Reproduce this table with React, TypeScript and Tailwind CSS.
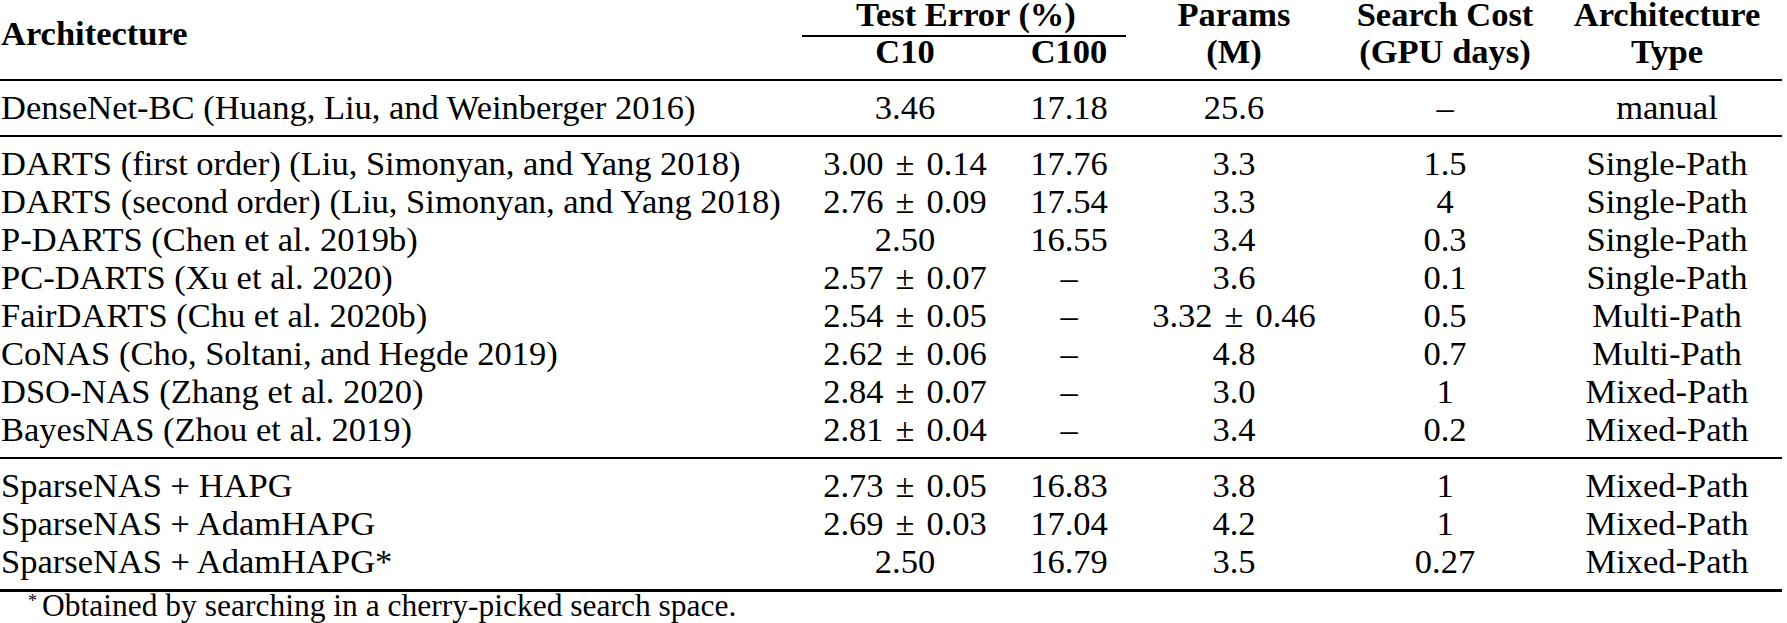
import React from "react";

type Cell = React.ReactNode;

function PM({ a, b }: { a: string; b: string }) {
  return (
    <span>
      {a}
      <span className="mx-[12px]">±</span>
      {b}
    </span>
  );
}

const sections: Cell[][][] = [
  [["DenseNet-BC (Huang, Liu, and Weinberger 2016)", "3.46", "17.18", "25.6", "–", "manual"]],
  [
    ["DARTS (first order) (Liu, Simonyan, and Yang 2018)", <PM a="3.00" b="0.14" />, "17.76", "3.3", "1.5", "Single-Path"],
    ["DARTS (second order) (Liu, Simonyan, and Yang 2018)", <PM a="2.76" b="0.09" />, "17.54", "3.3", "4", "Single-Path"],
    ["P-DARTS (Chen et al. 2019b)", "2.50", "16.55", "3.4", "0.3", "Single-Path"],
    ["PC-DARTS (Xu et al. 2020)", <PM a="2.57" b="0.07" />, "–", "3.6", "0.1", "Single-Path"],
    ["FairDARTS (Chu et al. 2020b)", <PM a="2.54" b="0.05" />, "–", <PM a="3.32" b="0.46" />, "0.5", "Multi-Path"],
    ["CoNAS (Cho, Soltani, and Hegde 2019)", <PM a="2.62" b="0.06" />, "–", "4.8", "0.7", "Multi-Path"],
    ["DSO-NAS (Zhang et al. 2020)", <PM a="2.84" b="0.07" />, "–", "3.0", "1", "Mixed-Path"],
    ["BayesNAS (Zhou et al. 2019)", <PM a="2.81" b="0.04" />, "–", "3.4", "0.2", "Mixed-Path"],
  ],
  [
    ["SparseNAS + HAPG", <PM a="2.73" b="0.05" />, "16.83", "3.8", "1", "Mixed-Path"],
    ["SparseNAS + AdamHAPG", <PM a="2.69" b="0.03" />, "17.04", "4.2", "1", "Mixed-Path"],
    ["SparseNAS + AdamHAPG*", "2.50", "16.79", "3.5", "0.27", "Mixed-Path"],
  ],
];

function Row({ cells }: { cells: Cell[] }) {
  return (
    <div className="grid grid-cols-[802px_206px_122px_208px_214px_230px] h-[38px] leading-[38px] whitespace-nowrap">
      <div className="pl-[1px]">{cells[0]}</div>
      {cells.slice(1).map((c, i) => (
        <div key={i} className="text-center">
          {c}
        </div>
      ))}
    </div>
  );
}

export default function App() {
  return (
    <div className="min-h-screen bg-white text-black font-['Liberation_Serif','Times_New_Roman',serif]">
      <div className="w-[1782px] text-[34.5px]">
        {/* header */}
        <div className="grid grid-cols-[802px_206px_122px_208px_214px_230px] grid-rows-[28px_9px_28px] pb-[14px] font-bold leading-[28px] whitespace-nowrap">
          <div className="col-start-1 row-start-1 row-span-3 self-center pl-[1px]">Architecture</div>
          <div className="col-start-2 col-span-2 row-start-1 text-center">Test Error (%)</div>
          <div className="col-start-2 col-span-2 row-start-2 pt-[7px] pr-[4px]">
            <div className="h-[1.5px] bg-black" />
          </div>
          <div className="col-start-2 row-start-3 text-center">C10</div>
          <div className="col-start-3 row-start-3 text-center">C100</div>
          <div className="col-start-4 row-start-1 text-center">Params</div>
          <div className="col-start-4 row-start-3 text-center">(M)</div>
          <div className="col-start-5 row-start-1 text-center">Search Cost</div>
          <div className="col-start-5 row-start-3 text-center">(GPU days)</div>
          <div className="col-start-6 row-start-1 text-center">Architecture</div>
          <div className="col-start-6 row-start-3 text-center">Type</div>
        </div>

        {sections.map((rows, si) => (
          <div key={si}>
            <div className="h-[2px] bg-black" />
            <div className="pt-[7px] pb-[9px]">
              {rows.map((r, ri) => (
                <Row key={ri} cells={r} />
              ))}
            </div>
          </div>
        ))}
        <div className="h-[3px] bg-black" />

        <div className="flex items-start pl-[28px] text-[31.5px] leading-[28px] whitespace-nowrap">
          <span className="text-[18px] leading-[18px]">*</span>
          <span className="ml-[5px]">Obtained by searching in a cherry-picked search space.</span>
        </div>
      </div>
    </div>
  );
}
